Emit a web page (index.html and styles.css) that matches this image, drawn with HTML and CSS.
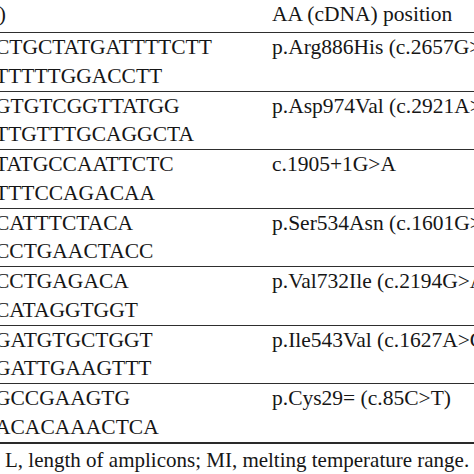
FILE: index.html
```html
<!DOCTYPE html>
<html>
<head>
<meta charset="utf-8">
<link rel="stylesheet" href="styles.css">
</head>
<body>
<div class="page">
  <table class="data">
    <thead>
      <tr>
        <th class="seq head-seq">0)</th>
        <th class="aa">AA (cDNA) position</th>
      </tr>
    </thead>
    <tbody>
      <tr>
        <td class="seq">CTGCTATGATTTTCTT<br>TTTTTGGACCTT</td>
        <td class="aa">p.Arg886His (c.2657G&gt;A)</td>
      </tr>
      <tr>
        <td class="seq">GTGTCGGTTATGG<br>TTGTTTGCAGGCTA</td>
        <td class="aa">p.Asp974Val (c.2921A&gt;T)</td>
      </tr>
      <tr>
        <td class="seq">TATGCCAATTCTC<br>TTTCCAGACAA</td>
        <td class="aa">c.1905+1G&gt;A</td>
      </tr>
      <tr>
        <td class="seq">CATTTCTACA<br>CCTGAACTACC</td>
        <td class="aa">p.Ser534Asn (c.1601G&gt;A)</td>
      </tr>
      <tr>
        <td class="seq">CCTGAGACA<br>CATAGGTGGT</td>
        <td class="aa">p.Val732Ile (c.2194G&gt;A)</td>
      </tr>
      <tr>
        <td class="seq">GATGTGCTGGT<br>GATTGAAGTTT</td>
        <td class="aa">p.Ile543Val (c.1627A&gt;G)</td>
      </tr>
      <tr class="last">
        <td class="seq">GCCGAAGTG<br>ACACAAACTCA</td>
        <td class="aa">p.Cys29= (c.85C&gt;T)</td>
      </tr>
    </tbody>
  </table>
  <p class="note">L, length of amplicons; MI, melting temperature range.</p>
</div>
</body>
</html>
```

FILE: styles.css
```css
html, body {
  margin: 0;
  padding: 0;
  background: #ffffff;
}

body {
  width: 474px;
  height: 474px;
  overflow: hidden;
  font-family: "Liberation Serif", "Times New Roman", serif;
  font-size: 21.5px;
  color: #161616;
}

.page {
  width: 474px;
  overflow: hidden;
}

.data {
  border-collapse: collapse;
  margin-left: -5px;
  width: 540px;
  table-layout: fixed;
}

.data th,
.data td {
  font-weight: normal;
  text-align: left;
  vertical-align: top;
  line-height: 28.75px;
  white-space: nowrap;
  padding: 0;
  overflow: hidden;
}

.data th {
  height: 28.75px;
  padding: 0 0 3.25px;
  border-bottom: 1px solid #2e2e2e;
}

.data td {
  height: 57.5px;
  border-bottom: 1px solid #2e2e2e;
}

.data tr.last td {
  border-bottom: 2px solid #2a2a2a;
}

.seq {
  width: 277px;
}

.head-seq {
  text-indent: -7px;
}

.aa {
  width: 263px;
}

.note {
  margin: 2px 0 0;
  padding-left: 5px;
  font-size: 21px;
  line-height: 28.75px;
  white-space: nowrap;
}
```
